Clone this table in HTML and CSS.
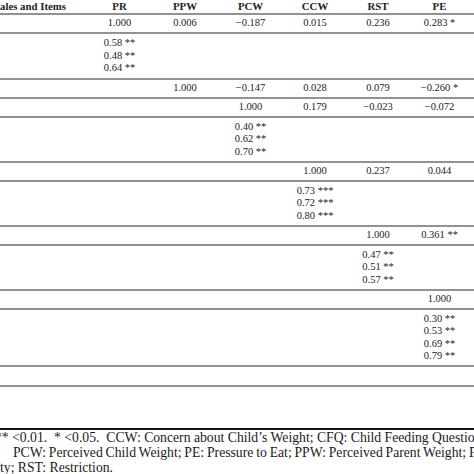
FILE: index.html
```html
<!DOCTYPE html>
<html>
<head>
<meta charset="utf-8">
<link rel="stylesheet" href="styles.css">
</head>
<body>
<div class="page">
  <div class="tbl">
    <div class="row head h15">
      <div class="lab">ales and Items</div>
      <div class="c">PR</div><div class="c">PPW</div><div class="c">PCW</div><div class="c">CCW</div><div class="c">RST</div><div class="c">PE</div>
    </div>
    <div class="row h19">
      <div class="lab"></div>
      <div class="c">1.000</div><div class="c">0.006</div><div class="c">−0.187</div><div class="c">0.015</div><div class="c">0.236</div><div class="c">0.283 *</div>
    </div>
    <div class="row h46">
      <div class="lab"></div>
      <div class="c"><div class="stack">0.58 **<br>0.48 **<br>0.64 **</div></div><div class="c"></div><div class="c"></div><div class="c"></div><div class="c"></div><div class="c"></div>
    </div>
    <div class="row h19">
      <div class="lab"></div>
      <div class="c"></div><div class="c">1.000</div><div class="c">−0.147</div><div class="c">0.028</div><div class="c">0.079</div><div class="c">−0.260 *</div>
    </div>
    <div class="row h19">
      <div class="lab"></div>
      <div class="c"></div><div class="c"></div><div class="c">1.000</div><div class="c">0.179</div><div class="c">−0.023</div><div class="c">−0.072</div>
    </div>
    <div class="row h45">
      <div class="lab"></div>
      <div class="c"></div><div class="c"></div><div class="c"><div class="stack">0.40 **<br>0.62 **<br>0.70 **</div></div><div class="c"></div><div class="c"></div><div class="c"></div>
    </div>
    <div class="row h19">
      <div class="lab"></div>
      <div class="c"></div><div class="c"></div><div class="c"></div><div class="c">1.000</div><div class="c">0.237</div><div class="c">0.044</div>
    </div>
    <div class="row h45">
      <div class="lab"></div>
      <div class="c"></div><div class="c"></div><div class="c"></div><div class="c"><div class="stack">0.73 ***<br>0.72 ***<br>0.80 ***</div></div><div class="c"></div><div class="c"></div>
    </div>
    <div class="row h19">
      <div class="lab"></div>
      <div class="c"></div><div class="c"></div><div class="c"></div><div class="c"></div><div class="c">1.000</div><div class="c">0.361 **</div>
    </div>
    <div class="row h45">
      <div class="lab"></div>
      <div class="c"></div><div class="c"></div><div class="c"></div><div class="c"></div><div class="c"><div class="stack">0.47 **<br>0.51 **<br>0.57 **</div></div><div class="c"></div>
    </div>
    <div class="row h19">
      <div class="lab"></div>
      <div class="c"></div><div class="c"></div><div class="c"></div><div class="c"></div><div class="c"></div><div class="c">1.000</div>
    </div>
    <div class="row h57">
      <div class="lab"></div>
      <div class="c"></div><div class="c"></div><div class="c"></div><div class="c"></div><div class="c"></div><div class="c"><div class="stack">0.30 **<br>0.53 **<br>0.69 **<br>0.79 **</div></div>
    </div>
    <div class="row h20">
      <div class="lab"></div>
    </div>
    <div class="row h43 last">
      <div class="lab"></div>
    </div>
  </div>
  <div class="notes">
    <div class="nl n1">** &lt;0.01.  * &lt;0.05.  CCW: Concern about Child’s Weight; CFQ: Child Feeding Questio</div>
    <div class="nl n2">PCW: Perceived Child Weight; PE: Pressure to Eat; PPW: Perceived Parent Weight; PI</div>
    <div class="nl n3">ty; RST: Restriction.</div>
  </div>
</div>
</body>
</html>
```
FILE: styles.css
```css
html, body {
  margin: 0;
  padding: 0;
  background: #ffffff;
}
body {
  width: 474px;
  height: 474px;
  overflow: hidden;
  font-family: "Liberation Serif", "Times New Roman", serif;
  color: #222222;
}
.page {
  width: 474px;
}
.tbl {
  display: flex;
  flex-direction: column;
}
.row {
  display: grid;
  grid-template-columns: 87px 65px 66px 65px 64px 62px 61px 4px;
  box-sizing: border-box;
  border-bottom: 2px solid #929292;
  font-size: 10.5px;
  line-height: 12.5px;
}
.row.last {
  border-bottom: 2px solid #111111;
}
.head {
  font-weight: bold;
  font-size: 10.8px;
}
.head .c, .head .lab {
  padding-bottom: 3px;
}
.lab {
  display: flex;
  align-items: center;
  white-space: nowrap;
}
.c {
  display: flex;
  align-items: center;
  justify-content: center;
  white-space: nowrap;
}
.stack {
  text-align: left;
}
.h15 { height: 15px; }
.h19 { height: 19px; }
.h20 { height: 20px; }
.h43 { height: 43px; }
.h45 { height: 45px; }
.h46 { height: 46px; }
.h57 { height: 57px; }
.notes {
  font-size: 13.7px;
  line-height: 15px;
  color: #1a1a1a;
}
.nl {
  white-space: pre;
  overflow: hidden;
}
.n1 {
  text-indent: -5px;
}
.n2 {
  padding-left: 13px;
  word-spacing: -0.6px;
}
.n3 {
  padding-left: 0;
}
```
